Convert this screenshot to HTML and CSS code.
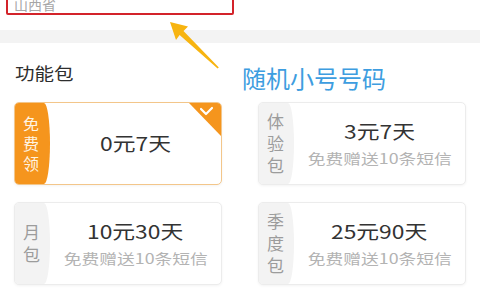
FILE: index.html
```html
<!DOCTYPE html>
<html lang="zh-CN">
<head>
<meta charset="utf-8">
<link rel="stylesheet" href="styles.css">
</head>
<body>
<div class="page">
  <header class="top">
    <div class="addr"><span class="addr-text">山西省</span></div>
  </header>
  <div class="divider"></div>
  <section class="pkg">
    <div class="title-row">
      <h2 class="heading"><span>功能包</span></h2>
      <div class="note">随机小号号码</div>
    </div>
    <div class="grid">
      <div class="card card-free">
        <div class="band"><span class="band-text">免费领</span></div>
        <div class="main"><div class="price"><span>0元7天</span></div></div>
        <svg class="corner" width="32" height="33" viewBox="0 0 32 33">
          <polygon points="0,0 32,0 32,33" fill="#f5951d"/>
          <polyline points="12,6 17,11 23,5" fill="none" stroke="#fff" stroke-width="2.2" stroke-linecap="round" stroke-linejoin="round"/>
        </svg>
      </div>
      <div class="card">
        <div class="band band-lg"><span class="band-text">体验包</span></div>
        <div class="main">
          <div class="price"><span>3元7天</span></div>
          <div class="sub"><span>免费赠送10条短信</span></div>
        </div>
      </div>
      <div class="card">
        <div class="band band-lg"><span class="band-text">月包</span></div>
        <div class="main">
          <div class="price"><span>10元30天</span></div>
          <div class="sub"><span>免费赠送10条短信</span></div>
        </div>
      </div>
      <div class="card">
        <div class="band band-lg"><span class="band-text">季度包</span></div>
        <div class="main">
          <div class="price"><span>25元90天</span></div>
          <div class="sub"><span>免费赠送10条短信</span></div>
        </div>
      </div>
    </div>
  </section>
  <svg class="arrow" width="480" height="100" viewBox="0 0 480 100">
    <polygon points="170,22 188,26.5 183.5,31 218.8,67.6 217.6,68.6 179.6,35 176,40" fill="#f7b410"/>
  </svg>
</div>
</body>
</html>
```

FILE: styles.css
```css
* { box-sizing: border-box; }
html, body { margin: 0; padding: 0; background: #fff; }
body {
  font-family: "Noto Sans CJK SC", "Noto Sans", "Liberation Sans", sans-serif;
  color: #333;
  width: 480px;
  height: 300px;
  overflow: hidden;
}
.page { position: relative; width: 480px; height: 300px; }

.top { height: 30px; overflow: hidden; }
.addr {
  margin: -20px 0 0 6px;
  width: 228px;
  height: 35px;
  border: 2px solid #d3232a;
  border-radius: 2px;
  display: flex;
  align-items: flex-end;
  padding: 0 0 2px 6px;
}
.addr-text { font-size: 14px; line-height: 14px; color: #a6a6a6; }

.divider { height: 13px; background: #f3f3f3; }

.pkg { padding: 0 14px; }
.title-row {
  display: flex;
  align-items: flex-start;
  height: 59px;
  padding: 20px 0 0 1px;
}
.heading {
  margin: 0;
  width: 227px;
  font-size: 17px;
  line-height: 20px;
  font-weight: 400;
  color: #2e2e2e;
}
.heading span { display: inline-block; transform: scaleX(1.15); transform-origin: left center; }
.note {
  margin-top: 2px;
  font-size: 24px;
  line-height: 26px;
  color: #3d9de0;
}

.grid {
  display: grid;
  grid-template-columns: 208px 208px;
  grid-auto-rows: 83px;
  column-gap: 36px;
  row-gap: 17px;
}
.card {
  position: relative;
  display: flex;
  border: 1px solid #ececec;
  border-radius: 5px;
  background: #fff;
  box-shadow: 0 1px 3px rgba(0, 0, 0, 0.05);
  overflow: hidden;
}
.card-free { border-color: #f3c68a; }

.band {
  width: 35px;
  flex: none;
  display: flex;
  align-items: center;
  justify-content: center;
  background: #f3f3f3;
  border-radius: 0 6px 6px 0 / 0 50% 50% 0;
  color: #9c9c9c;
  font-size: 16px;
  padding: 4px 3px 0 0;
}
.band-text {
  writing-mode: vertical-rl;
  text-orientation: upright;
  letter-spacing: 4px;
  line-height: 20px;
}
.band-lg { font-size: 17px; padding-top: 5px; }
.band-lg .band-text { letter-spacing: 5px; }
.card-free .band { background: #f5951d; color: #fff4e2; }

.main {
  flex: 1;
  display: flex;
  flex-direction: column;
  align-items: center;
  justify-content: center;
  gap: 6px;
  padding-bottom: 2px;
}
.price { font-size: 19px; line-height: 24px; color: #333; }
.price span, .sub span { display: inline-block; transform: scaleX(1.2); }
.sub { font-size: 14px; line-height: 18px; color: #b3b3b3; }
.sub span { transform: scaleX(1.27); }

.corner { position: absolute; top: 0; right: 0; }
.arrow { position: absolute; left: 0; top: 0; pointer-events: none; }
```
